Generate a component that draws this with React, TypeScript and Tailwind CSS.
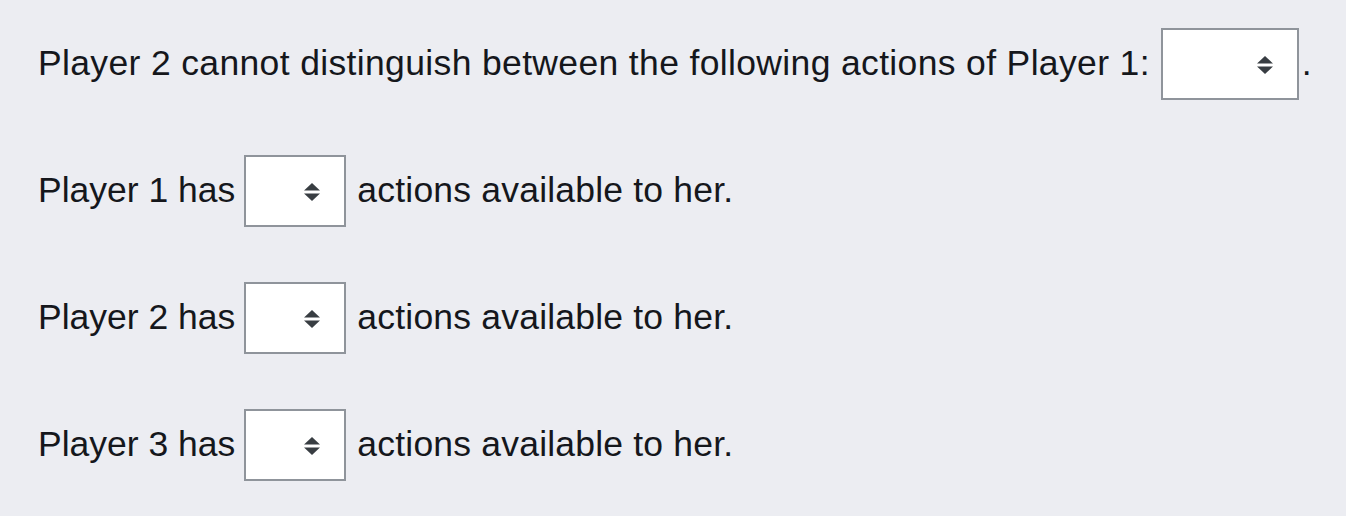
import React from "react";

function Arrows() {
  return (
    <svg width="16" height="18" viewBox="0 0 16 18" className="block">
      <polygon points="8,0 16,7.5 0,7.5" fill="#383d42" />
      <polygon points="0,10.5 16,10.5 8,18" fill="#383d42" />
    </svg>
  );
}

function Select({ w }: { w: string }) {
  return (
    <div
      className={`box-border flex h-[72px] items-center justify-end border-2 border-[#8f949b] bg-white pr-[24px] pt-[2px] ${w}`}
    >
      <Arrows />
    </div>
  );
}

export default function App() {
  return (
    <div className="min-h-[516px] w-full bg-[#ecedf2] pl-[38px] pt-[28px] font-['Liberation_Sans',Arial,sans-serif] text-[35.5px] leading-none text-[#15171c]">
      <div className="flex flex-col gap-[55px]">
        <div className="flex h-[72px] items-center">
          <span className="tracking-[0.35px]">
            Player 2 cannot distinguish between the following actions of Player 1:
          </span>
          <div className="ml-[11px]">
            <Select w="w-[138px]" />
          </div>
          <span className="ml-[3px]">.</span>
        </div>
        {[1, 2, 3].map((n) => (
          <div key={n} className="flex h-[72px] items-center">
            <span>Player {n} has</span>
            <div className="ml-[9px]">
              <Select w="w-[102px]" />
            </div>
            <span className="ml-[11px] tracking-[0.2px]">actions available to her.</span>
          </div>
        ))}
      </div>
    </div>
  );
}
